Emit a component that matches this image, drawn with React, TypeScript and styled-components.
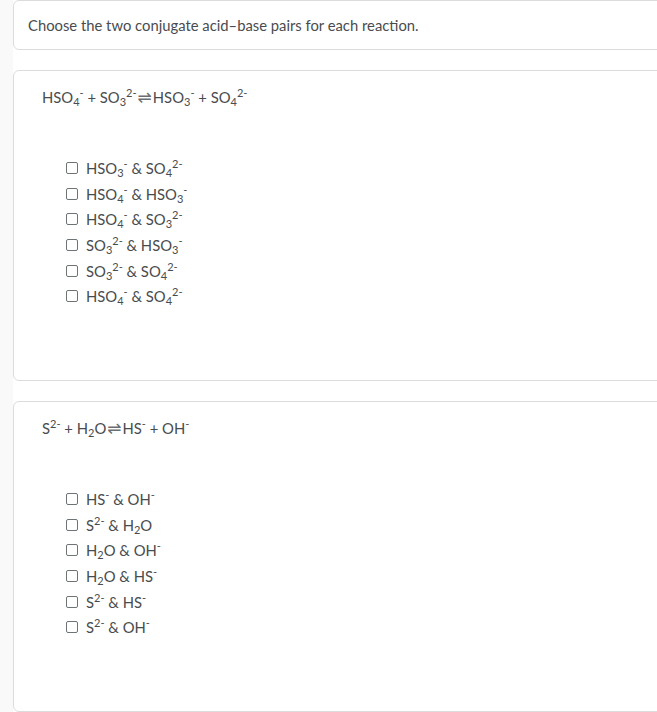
import React from "react";
import styled, { createGlobalStyle } from "styled-components";

const Global = createGlobalStyle`
  html, body { margin: 0; padding: 0; background: #ffffff; }
  body { font-family: Lato, "Open Sans", "Liberation Sans", sans-serif; color: #494c4e; overflow: hidden; }
`;

const Page = styled.div`
  display: flex;
  width: 657px;
  height: 712px;
  overflow: hidden;
`;

const Gutter = styled.div`
  flex: 0 0 13px;
  background: #f9f9f9;
`;

const Main = styled.div`
  flex: 1 0 auto;
  display: flex;
  flex-direction: column;
  gap: 20px;
  margin-right: -12px;
`;

const Card = styled.div<{ $tall?: boolean; $pad: number }>`
  box-sizing: border-box;
  border: 1px solid #dcdcdc;
  border-radius: 6px;
  background: #fff;
  padding: ${(p) => (p.$tall ? `16px ${p.$pad}px 0` : `14px ${p.$pad}px`)};
  min-height: ${(p) => (p.$tall ? "311px" : "50px")};
`;

const Line = styled.div`
  font-size: 14.8px;
  line-height: 20px;
  white-space: nowrap;
`;

const Options = styled.div`
  margin: 48px 0 0 24px;
  display: flex;
  flex-direction: column;
`;

const Row = styled.label`
  display: flex;
  align-items: center;
  height: 25.7px;
  gap: 8px;
  font-size: 14.8px;
  white-space: nowrap;
`;

const Box = styled.span`
  box-sizing: border-box;
  width: 12px;
  height: 12px;
  border: 1px solid #6e7376;
  border-radius: 2px;
  background: #fff;
  flex: 0 0 auto;
`;

const Sub = styled.span`
  font-size: 11px;
  line-height: 0;
  position: relative;
  top: 3px;
`;

const Sup = styled.span`
  font-size: 11px;
  line-height: 0;
  position: relative;
  top: -6px;
`;

const Arrow = styled.span`
  font-family: "DejaVu Sans", sans-serif;
  font-size: 17px;
  line-height: 0;
  margin: 0 1px;
  color: #6a6e70;
`;

type Sp = { b: string; sub?: string; sup?: string };
const Species = ({ b, sub, sup }: Sp) => (
  <>
    {b}
    {sub && <Sub>{sub}</Sub>}
    {sup && <Sup>{sup}</Sup>}
  </>
);

const HSO4: Sp = { b: "HSO", sub: "4", sup: "-" };
const HSO3: Sp = { b: "HSO", sub: "3", sup: "-" };
const SO3: Sp = { b: "SO", sub: "3", sup: "2-" };
const SO4: Sp = { b: "SO", sub: "4", sup: "2-" };

const S2: Sp[] = [{ b: "S", sup: "2-" }];
const H2O: Sp[] = [{ b: "H", sub: "2" }, { b: "O" }];
const HS: Sp[] = [{ b: "HS", sup: "-" }];
const OH: Sp[] = [{ b: "OH", sup: "-" }];

const Group = ({ parts }: { parts: Sp[] }) => (
  <>
    {parts.map((p, i) => (
      <Species key={i} {...p} />
    ))}
  </>
);

const pairs1: [Sp[], Sp[]][] = [
  [[HSO3], [SO4]],
  [[HSO4], [HSO3]],
  [[HSO4], [SO3]],
  [[SO3], [HSO3]],
  [[SO3], [SO4]],
  [[HSO4], [SO4]],
];

const pairs2: [Sp[], Sp[]][] = [
  [HS, OH],
  [S2, H2O],
  [H2O, OH],
  [H2O, HS],
  [S2, HS],
  [S2, OH],
];

const OptionList = ({ pairs }: { pairs: [Sp[], Sp[]][] }) => (
  <Options>
    {pairs.map(([a, b], i) => (
      <Row key={i}>
        <Box />
        <span>
          <Group parts={a} /> &amp; <Group parts={b} />
        </span>
      </Row>
    ))}
  </Options>
);

export default function App() {
  return (
    <Page>
      <Global />
      <Gutter />
      <Main>
        <Card $pad={14}>
          <Line>Choose the two conjugate acid–base pairs for each reaction.</Line>
        </Card>
        <Card $tall $pad={28}>
          <Line>
            <Species {...HSO4} /> + <Species {...SO3} />
            <Arrow>⇌</Arrow>
            <Species {...HSO3} /> + <Species {...SO4} />
          </Line>
          <OptionList pairs={pairs1} />
        </Card>
        <Card $tall $pad={28}>
          <Line>
            <Group parts={S2} /> + <Group parts={H2O} />
            <Arrow>⇌</Arrow>
            <Group parts={HS} /> + <Group parts={OH} />
          </Line>
          <OptionList pairs={pairs2} />
        </Card>
      </Main>
    </Page>
  );
}
